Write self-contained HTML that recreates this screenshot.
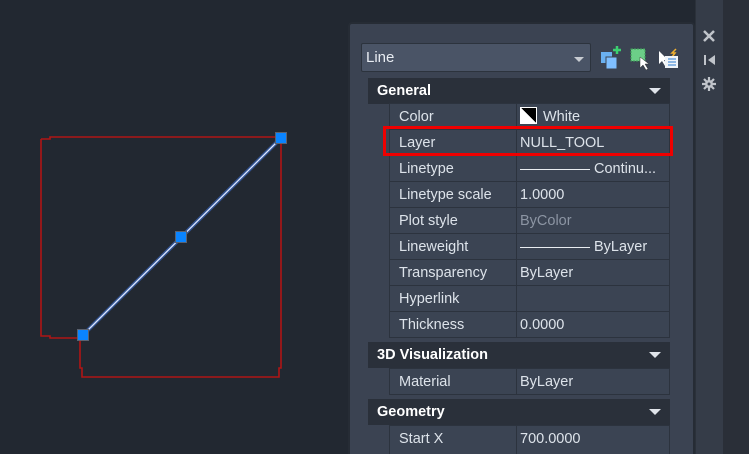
<!DOCTYPE html>
<html style="width:749px;height:454px;overflow:hidden"><head><style>
*{margin:0;padding:0;box-sizing:border-box}
body{width:749px;height:454px;overflow:hidden;background:#222831;font-family:"Liberation Sans",sans-serif;position:relative}
.a{position:absolute}
.panel{left:348px;top:22px;width:347px;height:432px;background:#3b4352;border:2px solid #262c35;border-bottom:none;border-radius:4px 4px 0 0}
.side{left:695px;top:0;width:28px;height:454px;background:#353c48;border-left:1px solid #2b313a}
.far{left:723px;top:0;width:26px;height:454px;background:#2a2f38}
.dd{left:361px;top:43px;width:230px;height:29px;background:#4a5466;border:1px solid #2c333d;border-radius:2px;color:#e8ecf2;font-size:15px;line-height:28px;padding-left:4px}
.hdr{left:368px;width:302px;height:26px;background:#2a303a;color:#fff;font-weight:bold;font-size:14.5px;line-height:27px;padding-left:9px}
.tri{position:absolute;right:9px;top:10px;width:0;height:0;border-left:6px solid transparent;border-right:6px solid transparent;border-top:6px solid #e0e4ea}
.row{left:389px;width:281px;height:27px;border:1px solid #2c333e;background:#3b4453;color:#dde3ea;font-size:14.5px;line-height:27px}
.row .l{position:absolute;left:9px;top:0}
.row .v{position:absolute;left:126px;top:0;width:154px;height:25px;border-left:1px solid #2c333e;padding-left:3px;white-space:nowrap}
.ln{display:inline-block;width:70px;height:1px;background:#e8ecf0;vertical-align:middle;margin-right:4px}
.g{width:12px;height:12px;background:#0a84ff;border:1px solid #5b6270;position:absolute}
</style></head><body>
<div class="a far"></div>
<div class="a side"></div>
<svg class="a" style="left:0;top:0" width="349" height="454">
<polyline points="41,139 50,139 50,137 281,137 281,368 279,368 279,377 82,377 82,368 80,368 80,338 50,338 50,336 41,336 41,139" fill="none" stroke="#b01515" stroke-width="1.6"/>
<line x1="83" y1="335" x2="281" y2="138" stroke="#3b6fd0" stroke-width="4" opacity=".6"/>
<line x1="83" y1="335" x2="281" y2="138" stroke="#dbe6ff" stroke-width="1.3"/>
</svg>
<div class="g" style="left:275px;top:132px"></div>
<div class="g" style="left:175px;top:231px"></div>
<div class="g" style="left:77px;top:329px"></div>
<div class="a panel"></div>
<div class="a dd">Line<div style="position:absolute;right:6px;top:13px;border-left:5px solid transparent;border-right:5px solid transparent;border-top:5px solid #c8ccd2"></div></div>
<svg class="a" style="left:598px;top:44px" width="90" height="28">
<rect x="3" y="8" width="11" height="11" fill="#6ab0f0"/><rect x="8" y="13" width="11" height="12" fill="#7fbfff" stroke="#3b4352"/>
<path d="M15 6h8M19 2v8" stroke="#3cd070" stroke-width="2.5"/>
<rect x="33" y="5" width="14" height="12" fill="#6ccf88" stroke="#3fa05a" stroke-dasharray="2 1"/>
<path d="M42 13l0 11 3-3 3 5 2-1-3-5 4 0z" fill="#fff" stroke="#333" stroke-width=".5"/>
<path d="M78 5l-4 4h3l-3 4" stroke="#f0b030" stroke-width="1.5" fill="none"/>
<path d="M61 7l0 13 3-3 3 5 2-1-3-5 4 0z" fill="#fff"/>
<rect x="67" y="12" width="13" height="12" fill="#f0f4f8"/><path d="M70 15h8M70 18h8M70 21h8" stroke="#2a7ad0"/>
</svg>
<svg class="a" style="left:702px;top:29px" width="14" height="14"><path d="M2 2l10 10M12 2L2 12" stroke="#c0c4ca" stroke-width="2.5"/></svg>
<svg class="a" style="left:703px;top:53px" width="14" height="14"><rect x="1" y="2" width="2" height="10" fill="#c0c4ca"/><path d="M12 2v10L5 7z" fill="#c0c4ca"/></svg>
<svg class="a" style="left:702px;top:77px" width="14" height="14"><circle cx="7" cy="7" r="4" fill="#c0c4ca"/><path d="M7 0v14M0 7h14M2 2l10 10M12 2L2 12" stroke="#c0c4ca" stroke-width="2.2"/><circle cx="7" cy="7" r="1.5" fill="#353c48"/></svg>
<div class="a hdr" style="top:78px">General<div class="tri"></div></div>
<div class="a row" style="top:103px"><span class="l">Color</span><span class="v"><span style="display:inline-block;width:17px;height:17px;vertical-align:-3px;border:1px solid #fff;background:linear-gradient(45deg,#fff 50%,#000 50%);margin-right:6px"></span>White</span></div>
<div class="a row" style="top:129px"><span class="l">Layer</span><span class="v">NULL_TOOL</span></div>
<div class="a row" style="top:155px"><span class="l">Linetype</span><span class="v"><span class="ln"></span>Continu...</span></div>
<div class="a row" style="top:181px"><span class="l">Linetype scale</span><span class="v">1.0000</span></div>
<div class="a row" style="top:207px"><span class="l">Plot style</span><span class="v" style="color:#8c95a3">ByColor</span></div>
<div class="a row" style="top:233px"><span class="l">Lineweight</span><span class="v"><span class="ln"></span>ByLayer</span></div>
<div class="a row" style="top:259px"><span class="l">Transparency</span><span class="v">ByLayer</span></div>
<div class="a row" style="top:285px"><span class="l">Hyperlink</span><span class="v"></span></div>
<div class="a row" style="top:311px"><span class="l">Thickness</span><span class="v">0.0000</span></div>
<div class="a hdr" style="top:342px">3D Visualization<div class="tri"></div></div>
<div class="a row" style="top:368px"><span class="l">Material</span><span class="v">ByLayer</span></div>
<div class="a hdr" style="top:399px">Geometry<div class="tri"></div></div>
<div class="a row" style="top:425px;height:29px;border-bottom:none"><span class="l">Start X</span><span class="v" style="height:29px">700.0000</span></div>
<div class="a" style="left:383px;top:126px;width:290px;height:30px;border:3px solid #f00000"></div>
</body></html>
